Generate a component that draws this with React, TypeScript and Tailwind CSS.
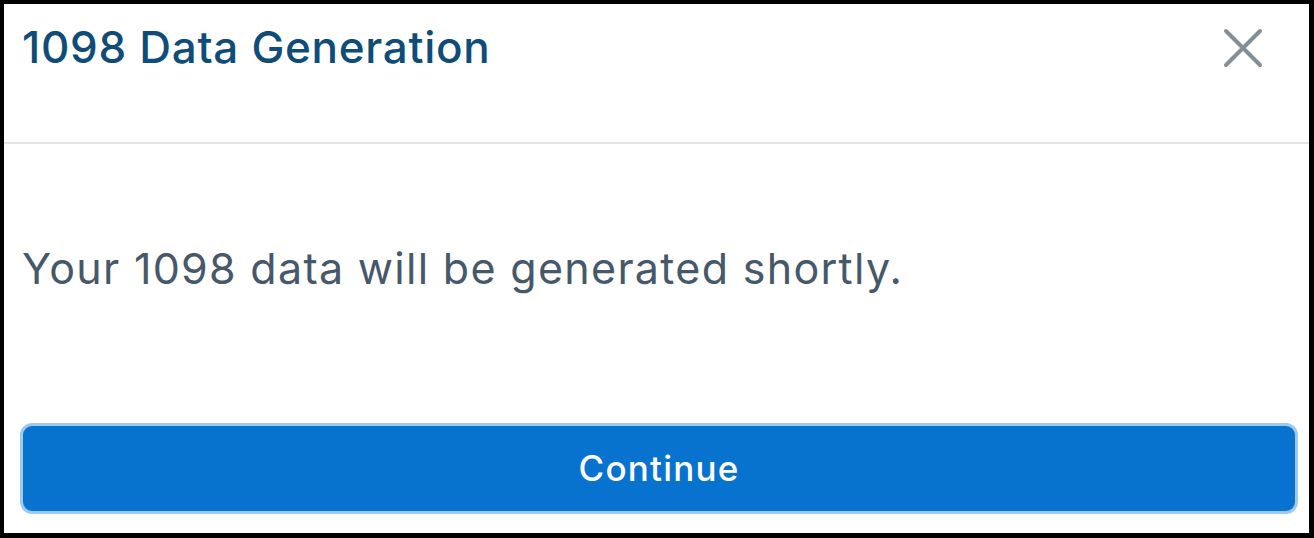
export default function App() {
  return (
    <div className="w-[1314px] h-[538px] bg-black pt-[4px] pl-[4px] pr-[5px] pb-[5px]" style={{ fontFamily: '"Inter", "Liberation Sans", sans-serif' }}>
      <div className="w-full h-full bg-white flex flex-col">
        <div className="h-[140px] flex items-start justify-between border-b-2 border-[#e1e5e8] pl-[18px] pr-[46px]">
          <h1 className="mt-[21px] text-[44px] leading-none font-medium tracking-[0.7px] text-[#0f4c78]">1098 Data Generation</h1>
          <svg className="mt-[24px]" width="40" height="40" viewBox="0 0 40 40" fill="none">
            <path d="M3 3 L37 37 M37 3 L3 37" stroke="#858f96" strokeWidth="4" strokeLinecap="round" />
          </svg>
        </div>
        <div className="flex-1 flex flex-col">
          <p className="mt-[103px] pl-[18px] text-[43px] leading-none tracking-[1.3px] text-[#46586a]">Your 1098 data will be generated shortly.</p>
          <div className="flex-1" />
          <button className="ml-[16px] mr-[11px] mb-[19px] h-[91px] rounded-[12px] border-[3px] border-[#9ccaf0] bg-[#0873cf] text-white text-[35px] font-medium tracking-[1.2px]">
            Continue
          </button>
        </div>
      </div>
    </div>
  );
}
